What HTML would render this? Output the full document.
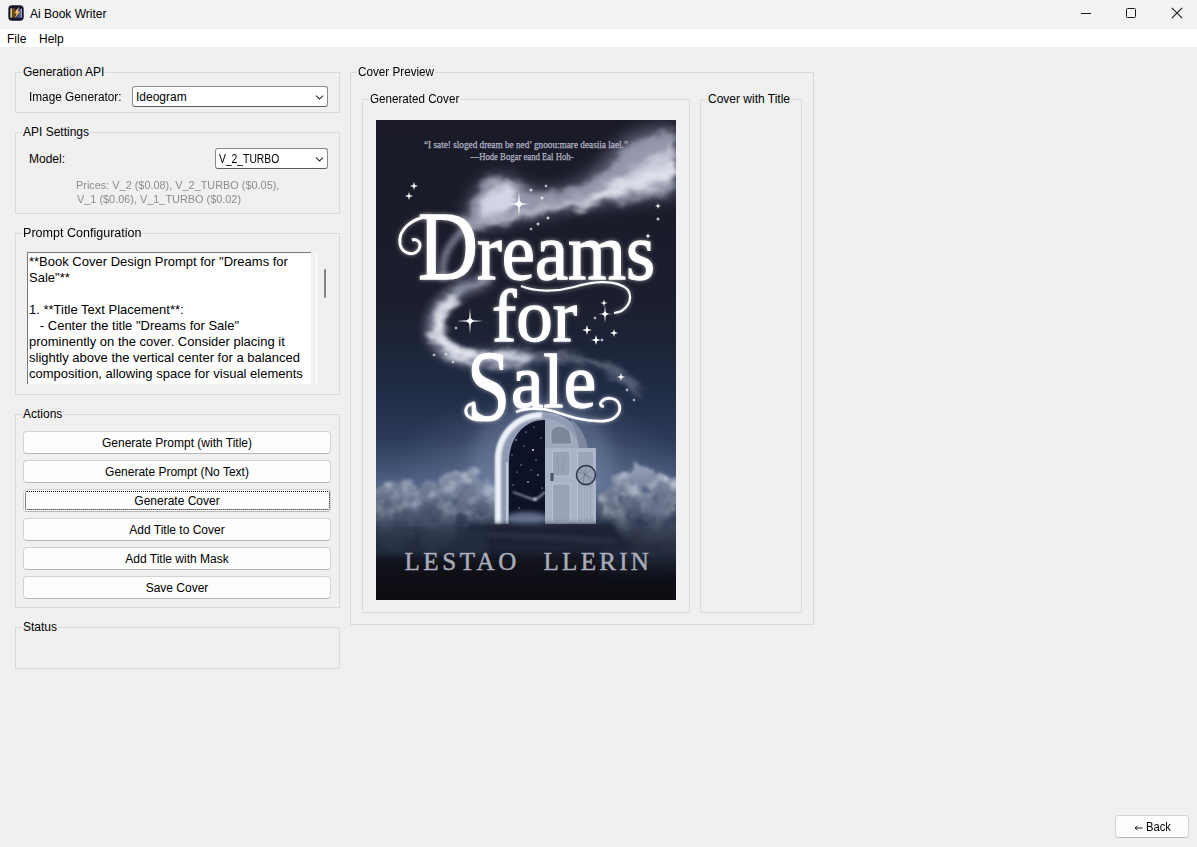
<!DOCTYPE html>
<html><head><meta charset="utf-8">
<style>
html,body{margin:0;padding:0;}
body{width:1197px;height:847px;overflow:hidden;background:#f0f0f0;position:relative;font-family:"Liberation Sans",sans-serif;font-size:12px;color:#000;}
.a{position:absolute;}
.t{position:absolute;white-space:pre;line-height:14px;height:14px;font-size:12px;color:#000;}
.fr{position:absolute;border:1px solid #dadada;box-sizing:border-box;}
.lb{position:absolute;white-space:pre;line-height:14px;height:14px;font-size:12px;background:#f0f0f0;padding:0 1px 0 1px;}
.btn{position:absolute;left:23px;width:308px;height:23px;box-sizing:border-box;border:1px solid #d2d2d2;border-bottom-color:#b8b8b8;border-radius:4px;background:#fdfdfd;}
.btn span{position:absolute;left:0;right:0;top:4px;text-align:center;white-space:pre;line-height:14px;font-size:12px;}
.cb{position:absolute;box-sizing:border-box;border:1px solid #8a8a8a;border-bottom-color:#5c5c5c;border-radius:3px;background:#fff;height:21px;}
.cb span{position:absolute;left:3px;top:3px;white-space:pre;line-height:14px;font-size:12px;}
.cb svg{position:absolute;right:3.4px;top:7.6px;}
</style></head><body>
<!-- title bar -->
<div class="a" style="left:0;top:0;width:1197px;height:29px;background:#f3f3f3;"></div>
<svg class="a" style="left:8px;top:5px" width="16" height="16" viewBox="0 0 16 16">
<rect x="0.3" y="0.3" width="15.4" height="15.4" rx="3.8" fill="#14142a"/>
<path d="M2.3 3.6 L4.3 3.2 L4.3 12.6 L2.3 12.8 Z" fill="#d9c185"/>
<path d="M4.3 3.2 L7.5 3.6 L7.5 12.4 L4.3 12.6 Z" fill="#6b4a1c"/>
<path d="M8.2 4 L13.8 3.6 L13.8 12.7 L8.2 12.8 Z" fill="#4b4f86"/>
<path d="M12.6 3.8 L13.9 3.6 L13.9 12.7 L12.6 12.7 Z" fill="#9fa7d2"/>
<path d="M11.3 1.6 L6.2 8.2 L8.6 8.2 L6.8 13.6 L12 6.6 L9.6 6.6 Z" fill="#f2b93a"/>
<path d="M10.4 2.8 L7.4 7.4 L9 7.4 Z" fill="#ffe08a"/>
</svg>
<div class="t" style="left:30px;top:7px;">Ai Book Writer</div>
<!-- window controls -->
<div class="a" style="left:1081px;top:13px;width:10px;height:1px;background:#1a1a1a;"></div>
<div class="a" style="left:1126px;top:8px;width:10px;height:10px;box-sizing:border-box;border:1px solid #1a1a1a;border-radius:1.5px;"></div>
<svg class="a" style="left:1171px;top:7px" width="12" height="12" viewBox="0 0 12 12"><path d="M0.8 0.8 L11.2 11.2 M11.2 0.8 L0.8 11.2" stroke="#1a1a1a" stroke-width="1.1"/></svg>
<!-- menubar -->
<div class="a" style="left:0;top:29px;width:1197px;height:18px;background:#fff;"></div>
<div class="t" style="left:7px;top:32px;">File</div>
<div class="t" style="left:39px;top:32px;">Help</div>

<!-- Generation API -->
<div class="fr" style="left:15px;top:72px;width:325px;height:41px;"></div>
<div class="lb" style="left:22px;top:65px;">Generation API</div>
<div class="t" style="left:29px;top:90px;transform:scaleX(0.984);transform-origin:0 0;">Image Generator:</div>
<div class="cb" style="left:132px;top:86px;width:196px;"><span>Ideogram</span>
<svg width="9" height="5" viewBox="0 0 9 5"><path d="M1 0.7 L4.5 4 L8 0.7" fill="none" stroke="#333" stroke-width="1.15"/></svg></div>

<!-- API Settings -->
<div class="fr" style="left:15px;top:132px;width:325px;height:82px;"></div>
<div class="lb" style="left:22px;top:125px;">API Settings</div>
<div class="t" style="left:29px;top:152px;">Model:</div>
<div class="cb" style="left:215px;top:148px;width:113px;"><span style="transform:scaleX(0.86);transform-origin:0 0;">V_2_TURBO</span>
<svg width="9" height="5" viewBox="0 0 9 5"><path d="M1 0.7 L4.5 4 L8 0.7" fill="none" stroke="#333" stroke-width="1.15"/></svg></div>
<div class="t" style="left:75.5px;top:178px;font-size:11px;color:#8c8c8c;transform:scaleX(0.99);transform-origin:0 0;">Prices: V_2 ($0.08), V_2_TURBO ($0.05),</div>
<div class="t" style="left:76.5px;top:192px;font-size:11px;color:#8c8c8c;transform:scaleX(0.99);transform-origin:0 0;">V_1 ($0.06), V_1_TURBO ($0.02)</div>

<!-- Prompt Configuration -->
<div class="fr" style="left:15px;top:233px;width:325px;height:162px;"></div>
<div class="lb" style="left:22px;top:226px;transform:scaleX(1.045);transform-origin:0 0;">Prompt Configuration</div>
<div class="a" style="left:27px;top:252px;width:284px;height:132px;background:#fff;border-left:1px solid #7a7a7a;border-top:1px solid #7a7a7a;box-sizing:border-box;overflow:hidden;">
<div style="position:absolute;left:1px;top:1px;font-size:13px;line-height:16px;white-space:pre;color:#000;">**Book Cover Design Prompt for "Dreams for
Sale"**

1. **Title Text Placement**:
   - Center the title "Dreams for Sale"
prominently on the cover. Consider placing it
slightly above the vertical center for a balanced
composition, allowing space for visual elements</div>
</div>
<div class="a" style="left:316px;top:252px;width:1px;height:132px;background:#fff;"></div>
<div class="a" style="left:324px;top:269px;width:2px;height:29px;background:#858585;border-radius:1px;"></div>

<!-- Actions -->
<div class="fr" style="left:15px;top:414px;width:325px;height:194px;"></div>
<div class="lb" style="left:22px;top:407px;">Actions</div>
<div class="btn" style="top:431px;"><span>Generate Prompt (with Title)</span></div>
<div class="btn" style="top:460px;"><span>Generate Prompt (No Text)</span></div>
<div class="btn" style="top:489px;"><span>Generate Cover</span><div class="a" style="left:1px;top:1px;right:0px;bottom:1px;border:1px dotted #000;border-radius:2px;"></div></div>
<div class="btn" style="top:518px;"><span>Add Title to Cover</span></div>
<div class="btn" style="top:547px;"><span>Add Title with Mask</span></div>
<div class="btn" style="top:576px;"><span>Save Cover</span></div>

<!-- Status -->
<div class="fr" style="left:15px;top:627px;width:325px;height:42px;"></div>
<div class="lb" style="left:22px;top:620px;">Status</div>

<!-- Cover Preview -->
<div class="fr" style="left:350px;top:72px;width:464px;height:553px;"></div>
<div class="lb" style="left:357px;top:65px;transform:scaleX(0.975);transform-origin:0 0;">Cover Preview</div>
<div class="fr" style="left:362px;top:99px;width:328px;height:514px;"></div>
<div class="lb" style="left:369px;top:92px;transform:scaleX(0.97);transform-origin:0 0;">Generated Cover</div>
<div class="fr" style="left:700px;top:99px;width:102px;height:514px;"></div>
<div class="lb" style="left:707px;top:92px;">Cover with Title</div>

<!-- COVER -->
<div class="a" id="cover" style="left:376px;top:120px;width:300px;height:480px;background:#1c1d2b;overflow:hidden;">
<svg width="300" height="480" viewBox="0 0 300 480" style="display:block">
<defs>
<linearGradient id="bg" x1="0" y1="0" x2="0" y2="1">
<stop offset="0" stop-color="#1a1a27"/>
<stop offset="0.25" stop-color="#1b1c2b"/>
<stop offset="0.375" stop-color="#1b1e2e"/>
<stop offset="0.46" stop-color="#1c2336"/>
<stop offset="0.54" stop-color="#1f2a42"/>
<stop offset="0.60" stop-color="#24314c"/>
<stop offset="0.667" stop-color="#2c3b5a"/>
<stop offset="0.71" stop-color="#3c4c6c"/>
<stop offset="0.76" stop-color="#506286"/>
<stop offset="0.84" stop-color="#303a52"/>
<stop offset="0.88" stop-color="#1e2332"/>
<stop offset="0.93" stop-color="#16171e"/>
<stop offset="0.96" stop-color="#121217"/>
<stop offset="1" stop-color="#0e0e11"/>
</linearGradient>
<radialGradient id="doorglow" cx="0.5" cy="0.5" r="0.5">
<stop offset="0" stop-color="#9aa8c4" stop-opacity="0.35"/>
<stop offset="1" stop-color="#9aa8c4" stop-opacity="0"/>
</radialGradient>
<filter id="b1" x="-20%" y="-20%" width="140%" height="140%"><feGaussianBlur stdDeviation="1"/></filter>
<filter id="b2" x="-30%" y="-30%" width="160%" height="160%"><feGaussianBlur stdDeviation="2.5"/></filter>
<filter id="b4" x="-50%" y="-50%" width="200%" height="200%"><feGaussianBlur stdDeviation="4"/></filter>
<filter id="b8" x="-50%" y="-50%" width="200%" height="200%"><feGaussianBlur stdDeviation="8"/></filter>
<filter id="glow" x="-10%" y="-10%" width="120%" height="120%">
<feGaussianBlur in="SourceAlpha" stdDeviation="2.2" result="bl"/>
<feFlood flood-color="#ffffff" flood-opacity="0.5"/>
<feComposite in2="bl" operator="in" result="g"/>
<feMerge><feMergeNode in="g"/><feMergeNode in="SourceGraphic"/></feMerge>
</filter>
<filter id="wisp" x="-30%" y="-30%" width="160%" height="160%">
<feGaussianBlur in="SourceGraphic" stdDeviation="3" result="soft"/>
<feTurbulence type="fractalNoise" baseFrequency="0.05 0.09" numOctaves="4" seed="7" result="n"/>
<feDisplacementMap in="soft" in2="n" scale="16" xChannelSelector="R" yChannelSelector="G" result="d"/>
<feGaussianBlur in="d" stdDeviation="1.2"/>
</filter>
<filter id="cl" x="-30%" y="-30%" width="160%" height="160%">
<feTurbulence type="fractalNoise" baseFrequency="0.045" numOctaves="4" seed="11" result="n"/>
<feDisplacementMap in="SourceGraphic" in2="n" scale="20" xChannelSelector="R" yChannelSelector="G" result="d"/>
<feGaussianBlur in="d" stdDeviation="1.8"/>
</filter>
<path id="spk" d="M0 -1 L0.22 -0.22 L1 0 L0.22 0.22 L0 1 L-0.22 0.22 L-1 0 L-0.22 -0.22 Z" fill="#fff"/>
</defs>
<rect width="300" height="480" fill="url(#bg)"/>
<ellipse cx="160" cy="345" rx="140" ry="70" fill="url(#doorglow)"/>

<!-- upper wisp -->
<g filter="url(#b8)" opacity="0.5">
<path d="M85 113 C110 106 140 100 200 88 C240 82 270 80 300 76 L300 6 C280 4 258 10 245 20 C232 32 220 52 200 62 C180 72 160 74 142 62 C134 54 120 52 108 60 C96 70 90 90 85 113 Z" fill="#9a9eba"/>
</g>
<g filter="url(#wisp)">
<path d="M85 113 C110 106 140 100 200 88 C240 82 270 78 300 72 L300 14 C282 12 262 18 250 28 C236 42 222 58 200 66 C178 74 158 74 142 64 C134 56 120 54 110 62 C98 72 90 90 85 113 Z" fill="#c0c3d8" opacity="0.58"/>
<path d="M96 106 C120 98 150 92 180 86 C215 78 245 66 270 52 C282 46 292 42 300 38 L300 56 C280 64 255 74 220 82 C180 90 135 98 96 108 Z" fill="#eceef6" opacity="0.85"/>
<path d="M215 74 C240 62 262 44 300 24 L300 36 C270 50 245 66 215 78 Z" fill="#e4e6f2" opacity="0.7"/>
<path d="M104 96 C110 72 124 58 136 64 C144 74 136 90 118 96 Z" fill="#e4e6f2" opacity="0.8"/>
</g>
<path d="M86 112 C72 124 64 140 68 160" stroke="#a8adc4" stroke-width="7" fill="none" filter="url(#b2)" opacity="0.6"/>

<!-- lower wisp -->
<g filter="url(#b4)" opacity="0.45">
<path d="M104 163 C82 168 64 180 58 198 C52 218 64 234 89 238 C110 242 130 240 150 238" stroke="#a8aec8" stroke-width="16" fill="none" stroke-linecap="round"/>
</g>
<g filter="url(#wisp)">
<path d="M114 162 C88 164 66 176 60 196" stroke="#c8cce0" stroke-width="5" fill="none" stroke-linecap="round" opacity="0.7"/>
<path d="M76 180 C64 190 58 204 62 216 C66 228 78 234 94 236 C112 238 130 238 150 237" stroke="#e4e7f2" stroke-width="12" fill="none" stroke-linecap="round" opacity="0.85"/>
<path d="M140 238 C170 236 205 236 230 246 C245 254 255 262 260 272" stroke="#bcc1d6" stroke-width="5" fill="none" stroke-linecap="round" opacity="0.6"/>
</g>
<path d="M74 186 C64 196 62 208 66 218 C70 228 80 232 96 234" stroke="#f4f6fb" stroke-width="6" fill="none" stroke-linecap="round" opacity="0.75" filter="url(#b2)"/>

<!-- quote -->
<text x="150" y="28" font-family="Liberation Serif" font-size="9.5" fill="#b2b4c6" stroke="#b2b4c6" stroke-width="0.25" text-anchor="middle" textLength="204" lengthAdjust="spacingAndGlyphs">“I sate! sloged dream be ned’ gnoou:mare deasiia lael.”</text>
<text x="146" y="39.5" font-family="Liberation Serif" font-size="9.5" fill="#b2b4c6" stroke="#b2b4c6" stroke-width="0.25" text-anchor="middle" textLength="103" lengthAdjust="spacingAndGlyphs">—Hode Bogar eand Eal Hoh-</text>

<!-- sparkles -->
<g>
<use href="#spk" transform="translate(143 84) scale(4 12)"/>
<use href="#spk" transform="translate(143 84) scale(11 3.5)"/>
<use href="#spk" transform="translate(94 201) scale(3.5 13)"/>
<use href="#spk" transform="translate(94 201) scale(13 3)"/>
<use href="#spk" transform="translate(229 194) scale(3 9)"/>
<use href="#spk" transform="translate(229 194) scale(7 2.5)"/>
<use href="#spk" transform="translate(211 210) scale(5)"/>
<use href="#spk" transform="translate(220 220) scale(5)"/>
<use href="#spk" transform="translate(238 213) scale(4)"/>
<use href="#spk" transform="translate(228 183) scale(3.5)"/>
<use href="#spk" transform="translate(245 257) scale(4)"/>
<use href="#spk" transform="translate(38 66) scale(4)"/>
<use href="#spk" transform="translate(33 76) scale(4)"/>
<use href="#spk" transform="translate(282 86) scale(3)"/>
<use href="#spk" transform="translate(272 116) scale(3)"/>
<use href="#spk" transform="translate(155 70) scale(2.5)"/>
<use href="#spk" transform="translate(166 78) scale(2.5)"/>
<use href="#spk" transform="translate(162 104) scale(2.5)"/>
<use href="#spk" transform="translate(172 98) scale(2.5)"/>
<use href="#spk" transform="translate(170 66) scale(2)"/>
<use href="#spk" transform="translate(155 109) scale(2)"/>
<use href="#spk" transform="translate(282 99) scale(2.5)"/>
<use href="#spk" transform="translate(80 208) scale(2)"/>
<use href="#spk" transform="translate(219 198) scale(2)"/>
<use href="#spk" transform="translate(226 220) scale(2)"/>
<use href="#spk" transform="translate(251 270) scale(2)"/>
<use href="#spk" transform="translate(258 280) scale(1.8)"/>
<use href="#spk" transform="translate(58 235) scale(2)"/>
<use href="#spk" transform="translate(70 234) scale(2)"/>
<use href="#spk" transform="translate(77 242) scale(1.8)"/>
</g>

<!-- bottom clouds -->
<defs>
<linearGradient id="cg" gradientUnits="userSpaceOnUse" x1="0" x2="0" y1="345" y2="445">
<stop offset="0" stop-color="#98a3b8"/>
<stop offset="0.3" stop-color="#6c778f"/>
<stop offset="0.6" stop-color="#3c465c"/>
<stop offset="0.85" stop-color="#252b3a"/>
<stop offset="1" stop-color="#1c202c"/>
</linearGradient>
<linearGradient id="cm" gradientUnits="userSpaceOnUse" x1="0" x2="0" y1="345" y2="430">
<stop offset="0" stop-color="#fff" stop-opacity="1"/>
<stop offset="0.45" stop-color="#fff" stop-opacity="0.55"/>
<stop offset="0.8" stop-color="#fff" stop-opacity="0"/>
</linearGradient>
<mask id="cmask"><rect x="0" y="330" width="300" height="130" fill="url(#cm)"/></mask>
<filter id="ctex" x="-10%" y="-10%" width="120%" height="120%">
<feGaussianBlur in="SourceAlpha" stdDeviation="1.5" result="sa"/>
<feTurbulence type="fractalNoise" baseFrequency="0.055" numOctaves="3" seed="9" result="n"/>
<feColorMatrix in="n" type="matrix" values="0 0 0 0 0.80  0 0 0 0 0.84  0 0 0 0 0.90  2.8 0 0 0 -1.25" result="nc"/>
<feGaussianBlur in="nc" stdDeviation="0.9" result="nb"/>
<feComposite in="nb" in2="sa" operator="in"/>
</filter>
<clipPath id="cclip"><circle cx="8" cy="376" r="14"/><circle cx="30" cy="372" r="13"/><circle cx="54" cy="378" r="13"/><circle cx="76" cy="364" r="13"/><circle cx="95" cy="358" r="11"/><circle cx="111" cy="368" r="9"/><circle cx="118" cy="384" r="8"/><circle cx="10" cy="392" r="16"/><circle cx="38" cy="392" r="16"/><circle cx="66" cy="392" r="16"/><circle cx="96" cy="384" r="14"/><circle cx="116" cy="398" r="9"/><circle cx="20" cy="414" r="18"/><circle cx="60" cy="414" r="18"/><circle cx="100" cy="410" r="14"/><circle cx="232" cy="378" r="10"/><circle cx="249" cy="364" r="12"/><circle cx="265" cy="356" r="12"/><circle cx="284" cy="366" r="12"/><circle cx="300" cy="370" r="12"/><circle cx="238" cy="394" r="13"/><circle cx="262" cy="384" r="15"/><circle cx="288" cy="388" r="15"/><circle cx="250" cy="414" r="16"/><circle cx="278" cy="418" r="18"/><circle cx="302" cy="416" r="14"/><circle cx="266" cy="436" r="16"/><circle cx="296" cy="440" r="16"/></clipPath>
</defs>
<g filter="url(#cl)">
<g fill="url(#cg)"><circle cx="8" cy="376" r="14"/><circle cx="30" cy="372" r="13"/><circle cx="54" cy="378" r="13"/><circle cx="76" cy="364" r="13"/><circle cx="95" cy="358" r="11"/><circle cx="111" cy="368" r="9"/><circle cx="118" cy="384" r="8"/><circle cx="10" cy="392" r="16"/><circle cx="38" cy="392" r="16"/><circle cx="66" cy="392" r="16"/><circle cx="96" cy="384" r="14"/><circle cx="116" cy="398" r="9"/><circle cx="20" cy="414" r="18"/><circle cx="60" cy="414" r="18"/><circle cx="100" cy="410" r="14"/><circle cx="232" cy="378" r="10"/><circle cx="249" cy="364" r="12"/><circle cx="265" cy="356" r="12"/><circle cx="284" cy="366" r="12"/><circle cx="300" cy="370" r="12"/><circle cx="238" cy="394" r="13"/><circle cx="262" cy="384" r="15"/><circle cx="288" cy="388" r="15"/><circle cx="250" cy="414" r="16"/><circle cx="278" cy="418" r="18"/><circle cx="302" cy="416" r="14"/><circle cx="266" cy="436" r="16"/><circle cx="296" cy="440" r="16"/></g>
</g>
<g mask="url(#cmask)" filter="url(#ctex)" opacity="0.9">
<g fill="#fff"><circle cx="8" cy="376" r="14"/><circle cx="30" cy="372" r="13"/><circle cx="54" cy="378" r="13"/><circle cx="76" cy="364" r="13"/><circle cx="95" cy="358" r="11"/><circle cx="111" cy="368" r="9"/><circle cx="118" cy="384" r="8"/><circle cx="10" cy="392" r="16"/><circle cx="38" cy="392" r="16"/><circle cx="66" cy="392" r="16"/><circle cx="96" cy="384" r="14"/><circle cx="116" cy="398" r="9"/><circle cx="20" cy="414" r="18"/><circle cx="60" cy="414" r="18"/><circle cx="100" cy="410" r="14"/><circle cx="232" cy="378" r="10"/><circle cx="249" cy="364" r="12"/><circle cx="265" cy="356" r="12"/><circle cx="284" cy="366" r="12"/><circle cx="300" cy="370" r="12"/><circle cx="238" cy="394" r="13"/><circle cx="262" cy="384" r="15"/><circle cx="288" cy="388" r="15"/><circle cx="250" cy="414" r="16"/><circle cx="278" cy="418" r="18"/><circle cx="302" cy="416" r="14"/><circle cx="266" cy="436" r="16"/><circle cx="296" cy="440" r="16"/></g>
</g>
<!-- door -->
<g>
<ellipse cx="166" cy="340" rx="70" ry="60" fill="#8090b0" opacity="0.35" filter="url(#b8)"/>
<path d="M119 404 L119 340 C119 313 140 292 166 292 C192 292 213 313 213 340 L213 404 Z" fill="#8f9bb2"/>
<path d="M133 404 L133 342 C133 318 148 300 168 300 L169 300 L169 404 Z" fill="#0e1228"/>
<g fill="#fff">
<circle cx="140" cy="320" r="0.7"/><circle cx="150" cy="312" r="0.6"/><circle cx="157" cy="330" r="0.9"/><circle cx="145" cy="345" r="0.6"/><circle cx="162" cy="355" r="0.7"/><circle cx="137" cy="365" r="0.6"/><circle cx="152" cy="362" r="0.8"/><circle cx="165" cy="318" r="0.6"/><circle cx="160" cy="340" r="0.6"/><circle cx="143" cy="388" r="0.6"/><circle cx="136" cy="335" r="0.5"/><circle cx="155" cy="350" r="0.5"/><circle cx="148" cy="326" r="0.5"/><circle cx="166" cy="368" r="0.6"/><circle cx="141" cy="352" r="0.5"/><circle cx="158" cy="307" r="0.5"/>
</g>
<path d="M137 372 Q150 377 159 380 Q164 377 169 372" stroke="#d6deee" stroke-width="1.1" fill="none" filter="url(#b1)"/>
<circle cx="159" cy="379" r="1.6" fill="#e8eef8" filter="url(#b1)"/>
<ellipse cx="151" cy="399" rx="22" ry="7" fill="#8a98b6" opacity="0.7" filter="url(#b2)"/>
<path d="M169 298 C186 300 199 312 204 328 L169 328 Z" fill="#9ea9bd"/>
<path d="M175 324 L175 312 C178 304 188 304 194 312 L196 324 Z" fill="#7c879c" stroke="#b4bccb" stroke-width="0.8"/>
<path d="M196 300 C206 308 213 322 213 340 L204 340 C203 322 200 310 196 304 Z" fill="#7d889e"/>
<path d="M169 328 L220 328 L220 404 L169 404 Z" fill="#aab4c6"/>
<rect x="176.5" y="331" width="17.5" height="25" fill="#99a3b7" stroke="#c2cad6" stroke-width="0.8"/>
<rect x="176.5" y="364" width="17.5" height="38" fill="#99a3b7" stroke="#c2cad6" stroke-width="0.8"/>
<rect x="201.5" y="331" width="16.5" height="71" fill="#9ca6ba" stroke="#c2cad6" stroke-width="0.8"/>
<path d="M181 336 L183 352 M188 336 L186 352" stroke="#8a94a8" stroke-width="0.8"/>
<rect x="174.5" y="353" width="3" height="8" fill="#4a5264"/>
<circle cx="210" cy="355" r="9.5" fill="#9aa4b8" stroke="#2a3244" stroke-width="1.5"/>
<path d="M202 352 L217 358 M203 361 L215 349 M210 346 L207 364 M204 349 L216 362" stroke="#5a6276" stroke-width="0.5"/>
<path d="M204 366 L204 400 M207 366 L207 402 M210 366 L210 398 M213 366 L213 401 M216 366 L216 397" stroke="#c4ccd8" stroke-width="0.6"/>
<path d="M122 404 L122 340 C122 315 141 295 166 295" fill="none" stroke="#eef2f8" stroke-width="6" filter="url(#b1)"/>
<path d="M131 404 L131 342" stroke="#c0c8d6" stroke-width="2"/>
</g>
<!-- platform -->
<path d="M92 404 L236 404 L258 432 L80 432 Z" fill="#1e2436" filter="url(#b2)"/>
<path d="M110 414 C150 416 200 418 240 422" stroke="#3c4660" stroke-width="3" fill="none" filter="url(#b2)" opacity="0.7"/>
<g filter="url(#b4)">
<rect x="-10" y="408" width="120" height="28" fill="#2a3248" opacity="0.6"/>
<rect x="225" y="430" width="85" height="24" fill="#2a3248" opacity="0.6"/>
</g>
<!-- dark bottom overlay -->
<rect x="-10" y="440" width="320" height="50" fill="#101014" opacity="0.6" filter="url(#b4)"/>

<!-- title -->
<g filter="url(#glow)" fill="#ffffff" stroke="#ffffff" stroke-width="1.3">
<text x="42" y="159" font-family="Liberation Serif" font-size="97" textLength="60" lengthAdjust="spacingAndGlyphs">D</text>
<text x="101" y="159" font-family="Liberation Serif" font-size="80" textLength="178" lengthAdjust="spacingAndGlyphs">reams</text>
<text x="116" y="221" font-family="Liberation Serif" font-size="75" textLength="85" lengthAdjust="spacingAndGlyphs">for</text>
<text x="91" y="299" font-family="Liberation Serif" font-size="100" textLength="43" lengthAdjust="spacingAndGlyphs">S</text>
<text x="135" y="286.6" font-family="Liberation Serif" font-size="77" textLength="85" lengthAdjust="spacingAndGlyphs">ale</text>
</g>
<g filter="url(#glow)" fill="none" stroke="#fff">
<path d="M55 96 C35 98 22 110 24 124 C26 134 38 137 43 129 C46 123 41 118 36 120" stroke-width="3"/>
<path d="M145 166 C160 172 180 172 198 167 C215 162 240 158 252 170 C258 180 250 192 238 193" stroke-width="2.2"/>
<path d="M140 292 C150 288 163 287 180 292 C195 297 210 302 228 301 C240 300 246 292 243 284 C240 277 230 277 226 281 C223 284 225 287 228 286" stroke-width="2.8"/>
<path d="M97 284 C91 284 88 290 91 295 C94 299 101 300 106 300" stroke-width="3"/>
</g>

<!-- author -->
<g font-family="Liberation Serif" font-size="25" fill="#a9adba" stroke="#a9adba" stroke-width="0.45">
<text x="28.5" y="450.4" letter-spacing="3.6">LESTAO</text>
<text x="167.5" y="450.4" letter-spacing="3.3">LLERIN</text>
</g>
</svg>

</div>

<!-- Back -->
<div class="a" style="left:1115px;top:815px;width:74px;height:23px;box-sizing:border-box;border:1px solid #d2d2d2;border-bottom-color:#b8b8b8;border-radius:4px;background:#fdfdfd;">
<svg style="position:absolute;left:18px;top:9px" width="10" height="6" viewBox="0 0 10 6"><path d="M1 3 L8.6 3 M3.4 0.9 L1.1 3 L3.4 5.1" fill="none" stroke="#111" stroke-width="0.95"/></svg><span style="position:absolute;left:30.3px;top:4px;white-space:pre;line-height:14px;font-size:12px;transform:scaleX(0.93);transform-origin:0 0;">Back</span></div>
</body></html>
